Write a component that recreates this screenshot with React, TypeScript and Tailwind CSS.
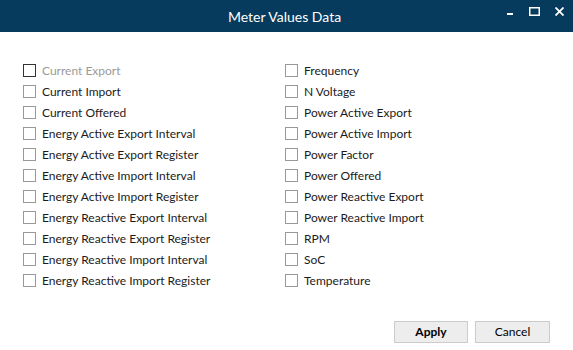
const left = [
  "Current Export",
  "Current Import",
  "Current Offered",
  "Energy Active Export Interval",
  "Energy Active Export Register",
  "Energy Active Import Interval",
  "Energy Active Import Register",
  "Energy Reactive Export Interval",
  "Energy Reactive Export Register",
  "Energy Reactive Import Interval",
  "Energy Reactive Import Register",
];

const right = [
  "Frequency",
  "N Voltage",
  "Power Active Export",
  "Power Active Import",
  "Power Factor",
  "Power Offered",
  "Power Reactive Export",
  "Power Reactive Import",
  "RPM",
  "SoC",
  "Temperature",
];

const Item = ({ label, focused }: { label: string; focused?: boolean }) => (
  <label className="flex items-center h-[21px] gap-[6px]">
    <span
      className={
        "w-[13px] h-[13px] border bg-white " +
        (focused ? "border-[#333333]" : "border-[#999999]")
      }
    />
    <span className={focused ? "text-[#9a9a9a]" : "text-[#1b1b1b]"}>{label}</span>
  </label>
);

export default function App() {
  return (
    <div
      className="w-[573px] h-[350px] bg-white flex flex-col text-[12px]"
      style={{ fontFamily: 'Lato, "Noto Sans", sans-serif' }}
    >
      {/* Title bar */}
      <div className="h-[32px] bg-[#063b5d] flex items-center relative shrink-0">
        <div className="flex-1 text-center text-white text-[14px] pr-[4px]">Meter Values Data</div>
        <div className="absolute right-0 top-0 pt-[7px] flex items-start pr-[9px] text-white">
          <span className="w-[6px] h-[2px] bg-white mt-[6px]" />
          <svg width="11" height="9" viewBox="0 0 11 9" className="ml-[16px]">
            <rect x="0.75" y="0.75" width="9.5" height="7.5" fill="none" stroke="white" strokeWidth="1.5" />
          </svg>
          <svg width="9" height="9" viewBox="0 0 9 9" className="ml-[15px]">
            <path d="M0.5 0.5L8.5 8.5M8.5 0.5L0.5 8.5" stroke="white" strokeWidth="1.8" />
          </svg>
        </div>
      </div>

      {/* Options */}
      <div className="flex pl-[23px] pt-[28px]">
        <div className="w-[262px] flex flex-col">
          {left.map((l, i) => (
            <Item key={l} label={l} focused={i === 0} />
          ))}
        </div>
        <div className="flex flex-col">
          {right.map((l) => (
            <Item key={l} label={l} />
          ))}
        </div>
      </div>

      {/* Buttons */}
      <div className="flex justify-end gap-[7px] pr-[23px] mt-[30px]">
        <button className="w-[74px] h-[22px] bg-[#ededed] border border-[#cccccc] font-bold text-black">
          Apply
        </button>
        <button className="w-[75px] h-[22px] bg-[#ededed] border border-[#cccccc] text-black">
          Cancel
        </button>
      </div>
    </div>
  );
}
